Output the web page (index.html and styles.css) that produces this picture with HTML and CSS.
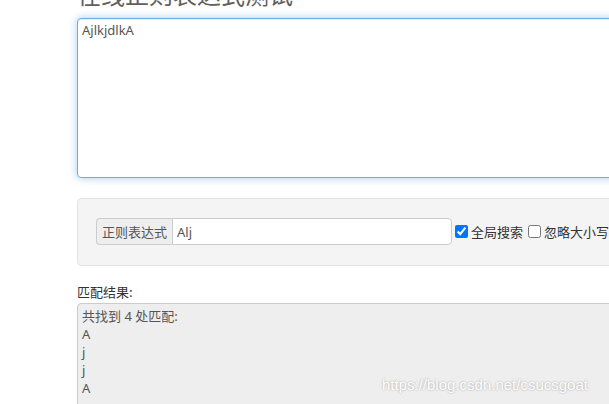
FILE: index.html
```html
<!DOCTYPE html>
<html lang="zh-CN">
<head>
<meta charset="utf-8">
<link rel="stylesheet" href="styles.css">
</head>
<body>
<div class="container">
  <h1 class="title">在线正则表达式测试</h1>
  <textarea class="source">AjlkjdlkA</textarea>
  <div class="well">
    <div class="controls">
      <div class="input-group">
        <span class="addon">正则表达式</span>
        <input class="regex" type="text" value="Alj">
      </div>
      <label class="opt"><input type="checkbox" checked>全局搜索</label>
      <label class="opt"><input type="checkbox">忽略大小写</label>
    </div>
  </div>
  <div class="result-label">匹配结果:</div>
  <div class="result">
    <div>共找到 4 处匹配:</div>
    <div>A</div>
    <div>j</div>
    <div>j</div>
    <div>A</div>
  </div>
</div>
<div class="watermark">https://blog.csdn.net/csucsgoat</div>
</body>
</html>
```
FILE: styles.css
```css
html, body {
  margin: 0;
  padding: 0;
  overflow: hidden;
  background: #fff;
}
body {
  font-family: "Noto Sans", "Noto Sans CJK SC", sans-serif;
  color: #555;
  font-size: 13px;
  width: 609px;
  height: 404px;
  position: relative;
}
.container {
  margin-left: 77px;
  width: 640px;
  margin-top: -19px;
}
.title {
  font-family: "Noto Sans CJK SC", sans-serif;
  font-size: 24px;
  font-weight: 400;
  line-height: 26px;
  margin: 0 0 11px 0;
  color: #5f5f5f;
}
.source {
  display: block;
  box-sizing: border-box;
  width: 100%;
  height: 160px;
  margin: 0;
  padding: 2px 4px;
  border: 1px solid #66afe9;
  border-radius: 4px;
  box-shadow: inset 0 1px 1px rgba(0,0,0,.075), 0 0 8px rgba(102,175,233,.6);
  outline: none;
  resize: none;
  font-family: "Noto Sans", "Noto Sans CJK SC", sans-serif;
  font-size: 13px;
  color: #555;
}
.well {
  margin-top: 20px;
  box-sizing: border-box;
  height: 68px;
  padding: 19px 18px;
  background: #f4f4f4;
  border: 1px solid #e3e3e3;
  border-radius: 4px;
}
.controls {
  display: flex;
  align-items: center;
}
.input-group {
  display: flex;
  height: 27px;
}
.addon {
  display: flex;
  align-items: center;
  box-sizing: border-box;
  width: 76px;
  justify-content: center;
  background: #eee;
  border: 1px solid #ccc;
  border-right: 0;
  border-radius: 4px 0 0 4px;
  color: #555;
  font-family: "Noto Sans CJK SC", sans-serif;
  font-size: 13px;
}
.regex {
  box-sizing: border-box;
  width: 280px;
  height: 27px;
  margin: 0;
  padding: 0 4px;
  border: 1px solid #ccc;
  border-radius: 0 4px 4px 0;
  background: #fff;
  font-family: "Noto Sans", "Noto Sans CJK SC", sans-serif;
  font-size: 13px;
  color: #555;
  outline: none;
}
.opt {
  display: flex;
  align-items: center;
  color: #333;
  font-family: "Noto Sans CJK SC", sans-serif;
  font-size: 13px;
}
.opt input {
  width: 13px;
  height: 13px;
  margin: 0 3px 0 3px;
  accent-color: #0075ff;
}
.opt + .opt input {
  margin-left: 5px;
}
.result-label {
  margin-top: 17px;
  margin-bottom: 2px;
  color: #333;
  font-family: "Noto Sans CJK SC", sans-serif;
  font-size: 13px;
  line-height: 18px;
}
.result {
  height: 140px;
  padding: 3px 4px;
  background: #eee;
  border: 1px solid #ccc;
  border-radius: 4px 0 0 0;
  font-size: 13px;
  line-height: 18px;
  color: #555;
}
.watermark {
  position: absolute;
  left: 382px;
  top: 376px;
  font-family: "Liberation Sans", Arial, sans-serif;
  font-size: 15px;
  color: #fff;
  text-shadow: 0 0 2px rgba(0,0,0,.35);
}
```
